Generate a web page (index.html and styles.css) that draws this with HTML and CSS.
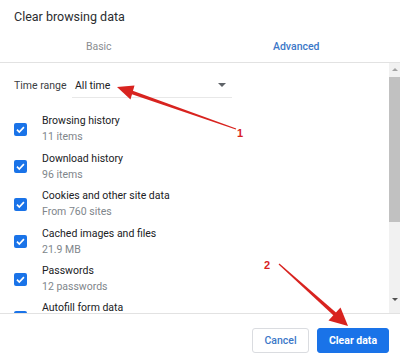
FILE: index.html
```html
<!DOCTYPE html>
<html>
<head>
<meta charset="utf-8">
<link rel="stylesheet" href="styles.css">
</head>
<body>
<div class="dialog">
  <div class="title">Clear browsing data</div>
  <div class="tabs">
    <div class="tab">Basic</div>
    <div class="tab active">Advanced</div>
  </div>
  <div class="body">
    <div class="list">
      <div class="range">
        <span class="range-label">Time range</span>
        <div class="select"><span>All time</span><span class="caret"></span></div>
      </div>
      <div class="item"><span class="cb"><svg viewBox="0 0 14 14"><path d="M3.2 7.2l2.5 2.5 5-5.2" fill="none" stroke="#fff" stroke-width="1.8"/></svg></span><div><div class="lbl">Browsing history</div><div class="sub">11 items</div></div></div>
      <div class="item"><span class="cb"><svg viewBox="0 0 14 14"><path d="M3.2 7.2l2.5 2.5 5-5.2" fill="none" stroke="#fff" stroke-width="1.8"/></svg></span><div><div class="lbl">Download history</div><div class="sub">96 items</div></div></div>
      <div class="item"><span class="cb"><svg viewBox="0 0 14 14"><path d="M3.2 7.2l2.5 2.5 5-5.2" fill="none" stroke="#fff" stroke-width="1.8"/></svg></span><div><div class="lbl">Cookies and other site data</div><div class="sub">From 760 sites</div></div></div>
      <div class="item"><span class="cb"><svg viewBox="0 0 14 14"><path d="M3.2 7.2l2.5 2.5 5-5.2" fill="none" stroke="#fff" stroke-width="1.8"/></svg></span><div><div class="lbl">Cached images and files</div><div class="sub">21.9 MB</div></div></div>
      <div class="item"><span class="cb"><svg viewBox="0 0 14 14"><path d="M3.2 7.2l2.5 2.5 5-5.2" fill="none" stroke="#fff" stroke-width="1.8"/></svg></span><div><div class="lbl">Passwords</div><div class="sub">12 passwords</div></div></div>
      <div class="item last"><span class="cb"></span><div><div class="lbl">Autofill form data</div></div></div>
    </div>
    <div class="scrollbar">
      <span class="up"></span>
      <span class="thumb"></span>
      <span class="down"></span>
    </div>
  </div>
  <div class="footer">
    <button class="btn cancel">Cancel</button>
    <button class="btn primary">Clear data</button>
  </div>
  <svg class="annot" width="400" height="361" viewBox="0 0 400 361">
    <polygon points="236.2,128.4 235.8,129.6 127.4,92.7 128.6,89.3" fill="#d8231f"/>
    <polygon points="117,87 134.5,85.5 130.5,99.5" fill="#d8231f"/>
    <text x="237" y="137" class="num">1</text>
    <polygon points="278.6,264.4 279.4,263.6 338.3,314.5 335.7,317.5" fill="#d8231f"/>
    <polygon points="348,326 328.5,320.5 340.5,307.5" fill="#d8231f"/>
    <text x="264" y="269" class="num">2</text>
  </svg>
</div>
</body>
</html>
```

FILE: styles.css
```css
html, body {
  margin: 0;
  padding: 0;
  background: #fff;
}
.dialog {
  position: relative;
  width: 400px;
  height: 361px;
  font-family: Roboto, "Liberation Sans", sans-serif;
  color: #202124;
  overflow: hidden;
}
.title {
  height: 30px;
  padding: 9px 0 0 14px;
  box-sizing: border-box;
  font-size: 12.5px;
  color: #2b2d30;
}
.tabs {
  display: grid;
  grid-template-columns: 1fr 1fr;
  padding-right: 5px;
  height: 32px;
  border-bottom: 1px solid #e2e2e2;
}
.tab {
  display: flex;
  align-items: center;
  justify-content: center;
  font-size: 10.5px;
  color: #8a8d91;
}
.tab.active {
  color: #3c78c8;
  font-weight: 500;
}
.body {
  display: flex;
  height: 250px;
  border-bottom: 1px solid #e2e2e2;
}
.list {
  flex: 1;
  overflow: hidden;
  padding-top: 10px;
}
.range {
  display: flex;
  align-items: center;
  height: 24px;
  padding-left: 14px;
  margin-bottom: 16px;
  font-size: 10.5px;
}
.range-label {
  color: #3c4043;
  width: 58px;
}
.select {
  width: 160px;
  height: 24px;
  box-sizing: border-box;
  padding-left: 3px;
  border-bottom: 1px solid #e8e8e8;
  display: flex;
  align-items: center;
  justify-content: space-between;
  margin-top: 1px;
  color: #202124;
}
.caret {
  width: 0;
  height: 0;
  border-left: 4px solid transparent;
  border-right: 4px solid transparent;
  border-top: 4px solid #5f6368;
  margin-right: 6px;
}
.item {
  display: flex;
  align-items: center;
  height: 37.5px;
  padding-left: 14px;
  box-sizing: border-box;
  padding-bottom: 5px;
}
.item.last {
  align-items: flex-start;
  padding-top: 2px;
  height: 12px;
  padding-bottom: 0;
}
.item.last .lbl {
  line-height: 10px;
}
.item.last .cb {
  margin-top: 8px;
}
.cb {
  width: 13px;
  height: 13px;
  border-radius: 2px;
  background: #1a73e8;
  margin-right: 15px;
  display: flex;
  flex-shrink: 0;
}
.cb svg {
  width: 13px;
  height: 13px;
}
.lbl {
  font-size: 10.5px;
  line-height: 16px;
  color: #202124;
}
.sub {
  font-size: 10.5px;
  line-height: 16px;
  color: #80868b;
}
.scrollbar {
  width: 11px;
  background: #f1f1f1;
  display: flex;
  flex-direction: column;
  align-items: center;
}
.up {
  margin-top: 5px;
  width: 0;
  height: 0;
  border-left: 3px solid transparent;
  border-right: 3px solid transparent;
  border-bottom: 3px solid #a3a3a3;
}
.thumb {
  margin-top: 6px;
  width: 11px;
  height: 145px;
  background: #c1c1c1;
}
.down {
  margin-top: auto;
  margin-bottom: 12px;
  width: 0;
  height: 0;
  border-left: 3px solid transparent;
  border-right: 3px solid transparent;
  border-top: 3px solid #505050;
}
.footer {
  display: flex;
  justify-content: flex-end;
  gap: 8px;
  padding: 14px 11px 0 0;
}
.btn {
  height: 25px;
  border-radius: 3px;
  font-family: Roboto, "Liberation Sans", sans-serif;
  font-size: 10.5px;
  font-weight: 500;
  padding: 0;
}
.cancel {
  width: 57px;
  background: #fff;
  border: 1px solid #dadce0;
  color: #3c78c8;
}
.primary {
  width: 72px;
  background: #1a73e8;
  border: 1px solid #1a73e8;
  color: #fff;
  font-weight: 700;
}
.annot {
  position: absolute;
  left: 0;
  top: 0;
  pointer-events: none;
}
.num {
  font-family: "Liberation Sans", sans-serif;
  font-size: 11px;
  font-weight: 700;
  fill: #d8231f;
}
```
